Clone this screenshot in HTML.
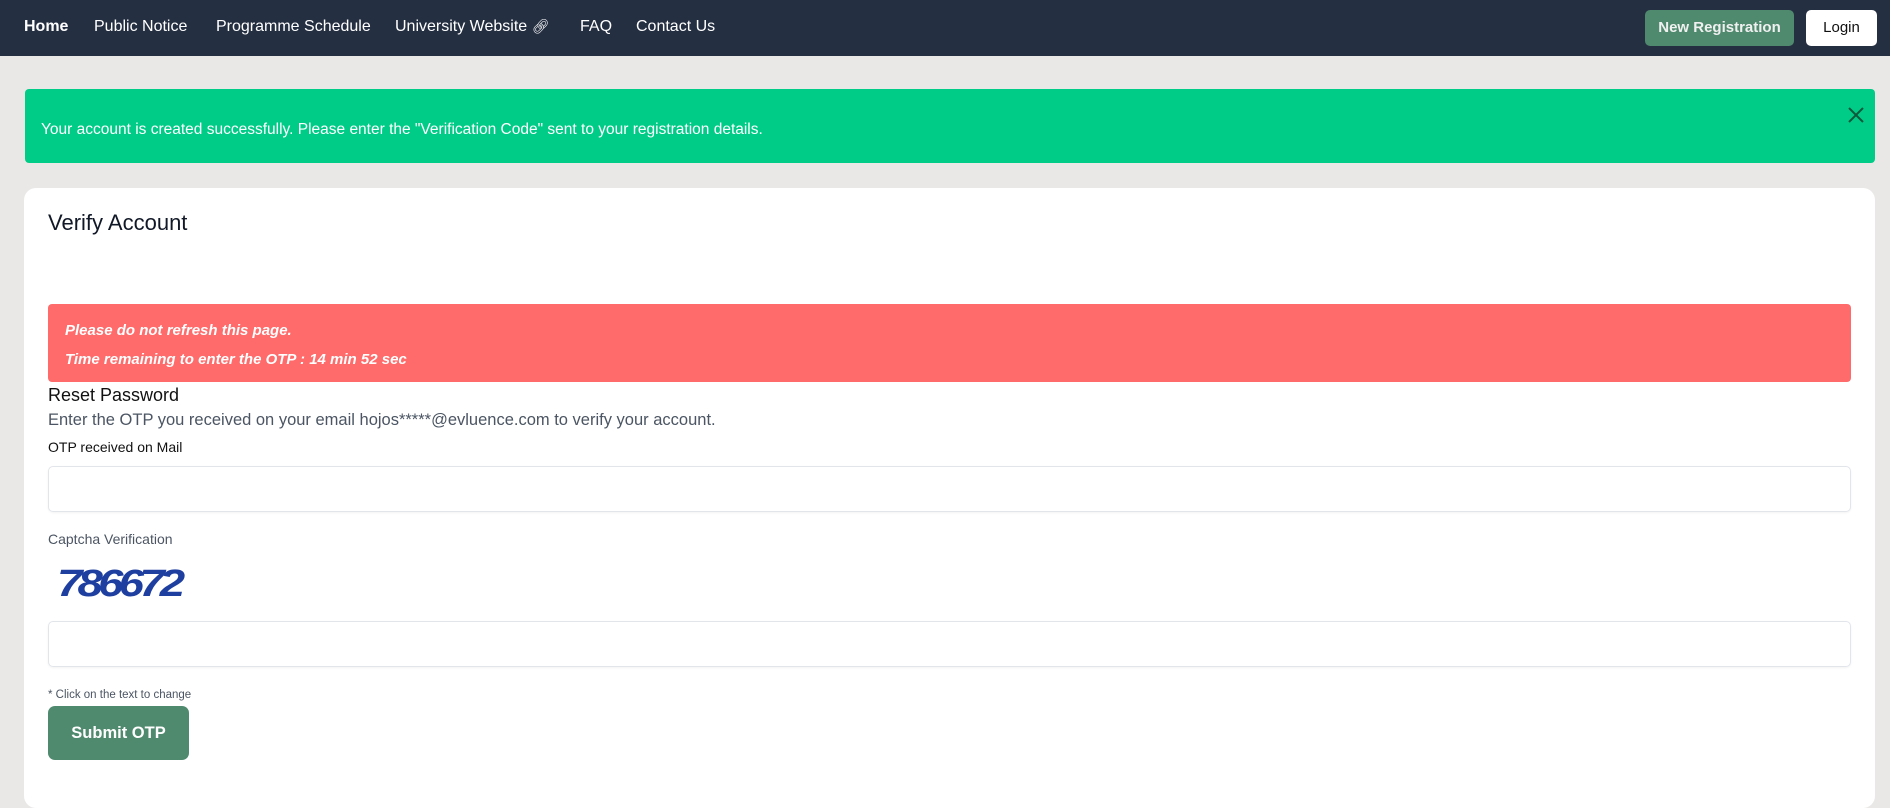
<!DOCTYPE html>
<html><head><meta charset="utf-8"><style>
*{box-sizing:border-box;margin:0;padding:0}
body{width:1890px;height:781px;overflow:hidden;background:#e9e8e6;font-family:"Liberation Sans",sans-serif;position:relative}
.nav{position:absolute;left:0;top:0;width:1890px;height:56px;background:#252f42}
.nav a{position:absolute;top:18px;color:#fff;font-size:16px;text-decoration:none}
.btn{position:absolute;top:10px;height:36px;border-radius:5px;font-size:15px;font-weight:bold;text-align:center;line-height:36px}
.alert{position:absolute;left:25px;top:89px;width:1850px;height:74px;background:#00cc88;border-radius:4px;color:#fff;font-size:15.5px;padding:0 0 0 16px;line-height:82px}
.card{position:absolute;left:24px;top:188px;width:1851px;height:620px;background:#fff;border-radius:12px}
.abs{position:absolute}
.red{left:24px;top:116px;width:1803px;height:78px;background:#ff6a6a;border-radius:4px;color:#fff;font-style:italic;font-weight:bold;font-size:15px;padding:12px 0 0 17px;line-height:29px}
.inp{left:24px;width:1803px;height:46px;border:1px solid #e2e5ea;border-radius:5px;box-shadow:0 1px 2px rgba(0,0,0,.05)}
</style></head><body>
<div class="nav">
<a style="left:24px;font-weight:bold">Home</a>
<a style="left:94px">Public Notice</a>
<a style="left:216px">Programme Schedule</a>
<a style="left:395px">University Website <span style="font-size:14px">🔗&#xFE0E;</span></a>
<a style="left:580px">FAQ</a>
<a style="left:636px">Contact Us</a>
<div class="btn" style="left:1645px;width:149px;background:#4f8a6e;color:#f0f0f0">New Registration</div>
<div class="btn" style="left:1806px;width:71px;background:#fff;color:#111;font-weight:normal">Login</div>
</div>
<div class="alert">Your account is created successfully. Please enter the "Verification Code" sent to your registration details.
<svg class="abs" style="left:1822px;top:17px" width="18" height="18" viewBox="0 0 18 18"><path d="M2 2L16 16M16 2L2 16" stroke="#0b5a3c" stroke-width="2"/></svg></div>
<div class="card">
<div class="abs" style="left:24px;top:22px;font-size:22px;color:#111827">Verify Account</div>
<div class="abs red">Please do not refresh this page.<br>Time remaining to enter the OTP : 14 min 52 sec</div>
<div class="abs" style="left:24px;top:197px;font-size:18px;color:#111">Reset Password</div>
<div class="abs" style="left:24px;top:223px;font-size:16.5px;color:#4b5563">Enter the OTP you received on your email hojos*****@evluence.com to verify your account.</div>
<div class="abs" style="left:24px;top:251px;font-size:14px;color:#111">OTP received on Mail</div>
<div class="abs inp" style="top:278px"></div>
<div class="abs" style="left:24px;top:343px;font-size:14px;color:#4b5563">Captcha Verification</div>
<div class="abs" style="left:33px;top:375px;font-size:38px;font-weight:bold;font-style:italic;color:#1e3fa0;letter-spacing:-4px;transform:scaleX(1.2);transform-origin:left">786672</div>
<div class="abs inp" style="top:433px"></div>
<div class="abs" style="left:24px;top:501px;font-size:11.5px;color:#4b5563">* Click on the text to change</div>
<div class="abs" style="left:24px;top:518px;width:141px;height:54px;background:#4f8a6e;border-radius:7px;color:#fff;font-size:16.5px;font-weight:bold;text-align:center;line-height:54px">Submit OTP</div>
</div>
</body></html>
